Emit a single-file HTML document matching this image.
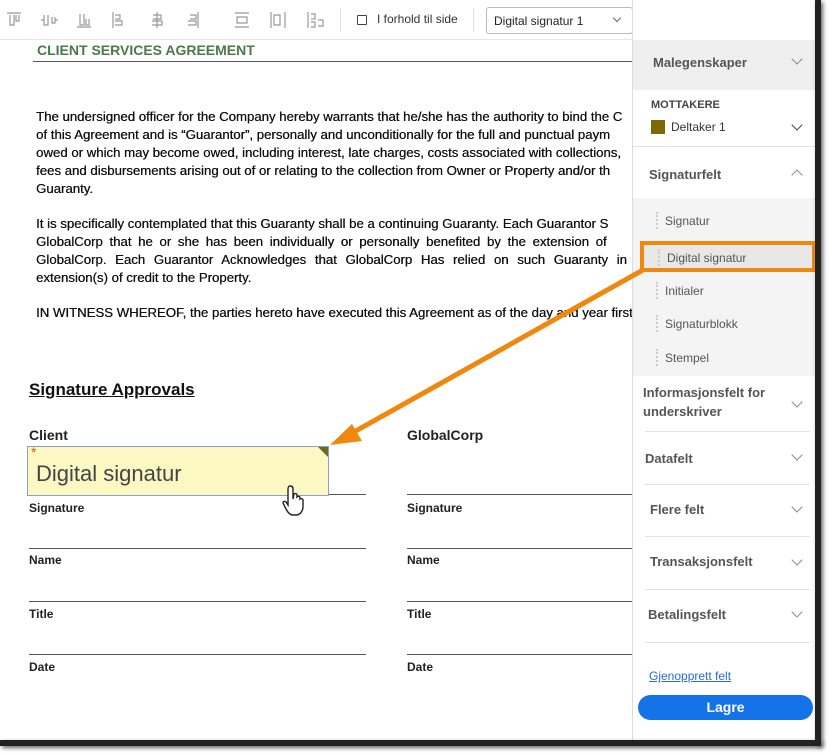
<!DOCTYPE html>
<html><head><meta charset="utf-8"><style>
*{margin:0;padding:0;box-sizing:border-box}
body{width:830px;height:755px;background:#fff;position:relative;overflow:hidden;font-family:"Liberation Sans",sans-serif;color:#222}
.a{position:absolute}
.doc{position:absolute;left:0;top:0;width:632px;height:740px;overflow:hidden}
.p{position:absolute;left:36px;font-size:13.2px;color:#111;white-space:nowrap;line-height:18px;text-shadow:0.3px 0 0 #111}
.tb{position:absolute;top:0;left:0;width:632px;height:40px;border-bottom:1px solid #e6e6e6;background:#fff}
.side{position:absolute;left:632px;top:0;width:183px;height:740px;background:#fff;border-left:1px solid #ddd}
.sh{font-size:13px;font-weight:bold;color:#555;position:absolute}
.chev{position:absolute;right:14px;width:8px;height:8px;border-right:1.5px solid #888;border-bottom:1.5px solid #888;transform:rotate(45deg)}
.hr{position:absolute;left:12px;width:165px;height:1px;background:#e3e3e3}
.item{position:absolute;left:32px;font-size:12px;color:#555}
.item:before{content:"";position:absolute;left:-9px;top:-2px;height:17px;border-left:2px dotted #ccc}
.lbl{position:absolute;font-size:12px;font-weight:bold;color:#222}
.ln{position:absolute;height:1px;background:#555}
</style></head><body>
<div class="doc">
<div class="tb">
<svg class="a" style="left:6px;top:10px" width="340" height="20" stroke="#999" fill="none" stroke-width="1.2">
<path d="M1 3h14M4 5v10h4V5M10 5v6h3V5"/>
<path d="M35 10h3M38 5v10h4V5M46 7v6h3V7M49 10h3"/>
<path d="M71 17h14M74 4v11h4V4M80 9v6h3V9"/>
<path d="M107 2v16M109 5h5v4h-5M109 11h7v4h-7"/>
<path d="M151 2v16M147 5h8v4h-8M146 11h10v4h-10"/>
<path d="M192 2v16M184 5h6v4h-6M182 11h8v4h-8"/>
<path d="M229 3h14M229 17h14M231 7h10v6h-10z"/>
<path d="M265 2v16M279 2v16M268 5h6v10h-6z"/>
<path d="M302 2v16M305 4h4v5h-4M305 12h4v5h-4M312 10h5v6h-5"/>
</svg>
<div class="a" style="left:340px;top:8px;width:1px;height:24px;background:#e0e0e0"></div>
<div class="a" style="left:357px;top:15px;width:10px;height:10px;border:1.5px solid #444;border-radius:1px"></div>
<div class="a" style="left:377px;top:12px;font-size:12px;color:#333">I forhold til side</div>
<div class="a" style="left:473px;top:8px;width:1px;height:24px;background:#e0e0e0"></div>
<div class="a" style="left:486px;top:7px;width:147px;height:27px;border:1px solid #bbb;border-radius:3px;font-size:12px;color:#222;padding:6px 7px">Digital signatur 1</div>
<div class="chev" style="left:614px;top:15px;width:6px;height:6px;border-color:#666;border-width:1px"></div>
</div>
<div class="a" style="left:37px;top:42px;font-size:14px;font-weight:bold;color:#4a7a4a">CLIENT SERVICES AGREEMENT</div>
<div class="a" style="left:33px;top:61px;width:600px;height:1px;background:#555"></div>
<div class="p" style="top:108px">The undersigned officer for the Company hereby warrants that he/she has the authority to bind the C</div>
<div class="p" style="top:126px">of this Agreement and is “Guarantor”, personally and unconditionally for the full and punctual paym</div>
<div class="p" style="top:144px">owed or which may become owed, including interest, late charges, costs associated with collections,</div>
<div class="p" style="top:162px">fees and disbursements arising out of or relating to the collection from Owner or Property and/or th</div>
<div class="p" style="top:180px">Guaranty.</div>
<div class="p" style="top:215px">It is specifically contemplated that this Guaranty shall be a continuing Guaranty. Each Guarantor S</div>
<div class="p" style="top:233px;word-spacing:3px">GlobalCorp that he or she has been individually or personally benefited by the extension of</div>
<div class="p" style="top:251px;word-spacing:5px">GlobalCorp. Each Guarantor Acknowledges that GlobalCorp Has relied on such Guaranty in</div>
<div class="p" style="top:269px">extension(s) of credit to the Property.</div>
<div class="p" style="top:304px">IN WITNESS WHEREOF, the parties hereto have executed this Agreement as of the day and year first al</div>
<div class="a" style="left:29px;top:380px;font-size:17px;font-weight:bold;text-decoration:underline;color:#111">Signature Approvals</div>
<div class="lbl" style="left:29px;top:427px;font-size:14px">Client</div>
<div class="lbl" style="left:407px;top:427px;font-size:14px">GlobalCorp</div>
<div class="ln" style="left:29px;top:494px;width:337px"></div>
<div class="ln" style="left:407px;top:494px;width:225px"></div>
<div class="lbl" style="left:29px;top:501px">Signature</div>
<div class="lbl" style="left:407px;top:501px">Signature</div>
<div class="ln" style="left:29px;top:548px;width:337px"></div>
<div class="ln" style="left:407px;top:548px;width:225px"></div>
<div class="lbl" style="left:29px;top:553px">Name</div>
<div class="lbl" style="left:407px;top:553px">Name</div>
<div class="ln" style="left:29px;top:601px;width:337px"></div>
<div class="ln" style="left:407px;top:601px;width:225px"></div>
<div class="lbl" style="left:29px;top:607px">Title</div>
<div class="lbl" style="left:407px;top:607px">Title</div>
<div class="ln" style="left:29px;top:654px;width:337px"></div>
<div class="ln" style="left:407px;top:654px;width:225px"></div>
<div class="lbl" style="left:29px;top:660px">Date</div>
<div class="lbl" style="left:407px;top:660px">Date</div>
<div class="a" style="left:27px;top:446px;width:302px;height:50px;background:#fbf8c4;border:1px solid #8aa0c8"></div>
<div class="a" style="left:318px;top:447px;width:0;height:0;border-top:10px solid #6b6b1a;border-left:10px solid transparent"></div>
<div class="a" style="left:31px;top:444px;color:#e05a00;font-size:14px">*</div>
<div class="a" style="left:36px;top:461px;font-size:22px;color:#444">Digital signatur</div>
<svg class="a" style="left:282px;top:484px" width="28" height="34"><path d="M8 2c2 0 3 1 3 3v10l1-5c2-1 3 0 3 1v2c1-1 3-1 3 1v1c1-1 3 0 3 1v7c0 4-3 8-7 8h-3c-3 0-5-2-7-6l-3-6c0-2 2-2 3-1l2 3V5c0-2 1-3 2-3z" fill="#fff" stroke="#222" stroke-width="1.4"/></svg>
</div>
<div class="side">
<div class="a" style="left:0;top:40px;width:183px;height:50px;background:#efefef"></div>
<div class="sh" style="left:20px;top:55px">Malegenskaper</div>
<div class="chev" style="top:55px"></div>
<div class="a" style="left:18px;top:99px;font-size:11px;font-weight:bold;color:#444">MOTTAKERE</div>
<div class="a" style="left:18px;top:120px;width:14px;height:14px;background:#7c6a08"></div>
<div class="a" style="left:38px;top:120px;font-size:12px;color:#333">Deltaker 1</div>
<div class="chev" style="top:121px;border-color:#444"></div>
<div class="hr" style="top:146px;left:0;width:183px"></div>
<div class="sh" style="left:16px;top:167px">Signaturfelt</div>
<div class="chev" style="top:171px;transform:rotate(225deg)"></div>
<div class="a" style="left:0;top:198px;width:183px;height:178px;background:#f4f4f4"></div>
<div class="item" style="top:214px">Signatur</div>
<div class="a" style="left:11px;top:246px;width:170px;height:22px;background:#e8e8e8"></div>
<div class="item" style="top:251px;left:34px">Digital signatur</div>
<div class="item" style="top:284px">Initialer</div>
<div class="item" style="top:317px">Signaturblokk</div>
<div class="item" style="top:351px">Stempel</div>
<div class="sh" style="left:10px;top:383px;line-height:19px">Informasjonsfelt for<br>underskriver</div>
<div class="chev" style="top:398px"></div>
<div class="hr" style="top:431px"></div>
<div class="sh" style="left:12px;top:451px">Datafelt</div>
<div class="chev" style="top:451px"></div>
<div class="hr" style="top:484px"></div>
<div class="sh" style="left:17px;top:502px">Flere felt</div>
<div class="chev" style="top:503px"></div>
<div class="hr" style="top:536px"></div>
<div class="sh" style="left:17px;top:554px">Transaksjonsfelt</div>
<div class="chev" style="top:556px"></div>
<div class="hr" style="top:589px"></div>
<div class="sh" style="left:15px;top:607px">Betalingsfelt</div>
<div class="chev" style="top:608px"></div>
<div class="hr" style="top:642px"></div>
<div class="a" style="left:16px;top:669px;font-size:12px;color:#2c6bd6;text-decoration:underline">Gjenopprett felt</div>
<div class="a" style="left:5px;top:695px;width:175px;height:25px;background:#1473e6;border-radius:13px;color:#fff;font-weight:bold;font-size:14px;text-align:center;line-height:25px">Lagre</div>
</div>
<div class="a" style="left:640px;top:241px;width:176px;height:31px;border:4px solid #f0870f"></div>
<svg class="a" style="left:0;top:0" width="830" height="755"><line x1="643" y1="270" x2="345" y2="437" stroke="#f0870f" stroke-width="5"/><polygon points="330,445 352,424 362,441" fill="#f0870f"/></svg>
<div class="a" style="left:815px;top:0;width:6px;height:745px;background:#222;box-shadow:2px 2px 4px #666"></div>
<div class="a" style="left:0;top:740px;width:821px;height:6px;background:#222;box-shadow:2px 2px 4px #666"></div>
</body></html>
